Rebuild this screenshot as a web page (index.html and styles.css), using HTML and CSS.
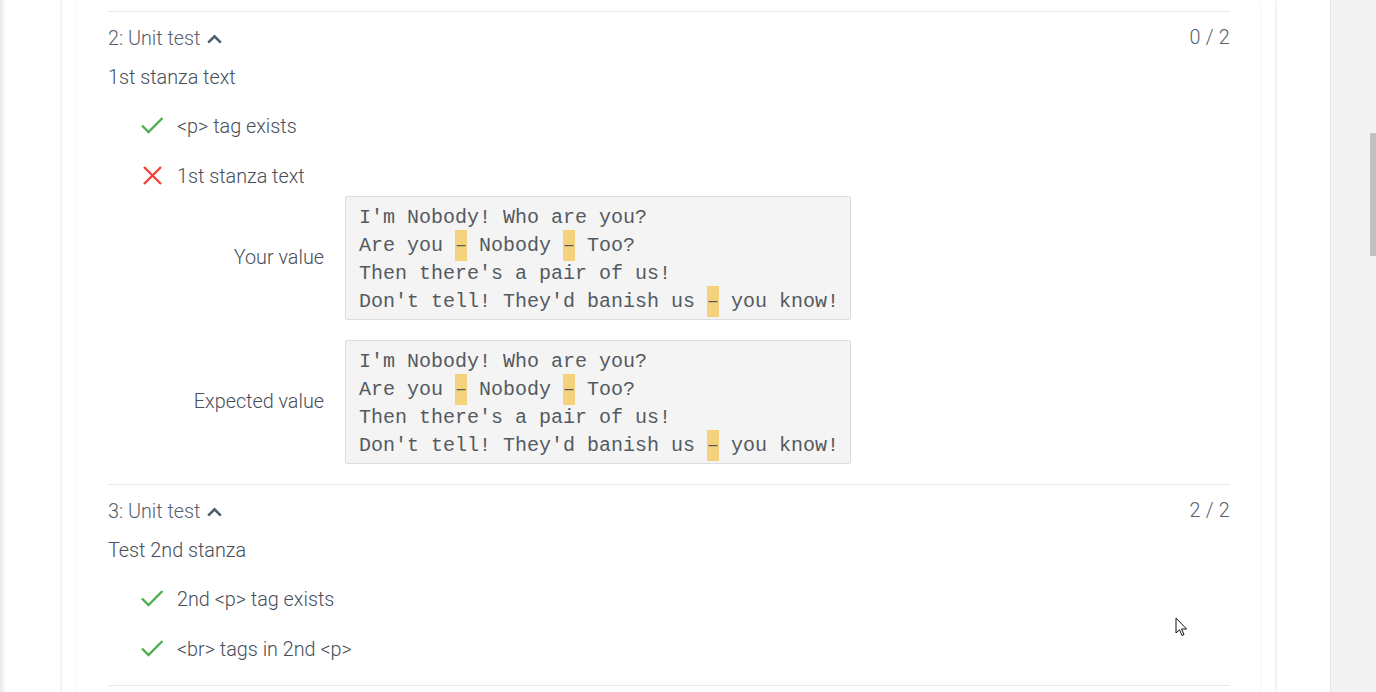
FILE: index.html
```html
<!DOCTYPE html>
<html>
<head>
<meta charset="utf-8">
<link rel="stylesheet" href="styles.css">
</head>
<body>
<div class="page">
  <div class="edge-left"></div>
  <div class="outer">
    <div class="inner">
      <div class="prev"></div>

      <section class="test">
        <div class="test-head">
          <div class="test-title">2: Unit test
            <svg class="chev" width="15" height="10" viewBox="0 0 15 10"><polyline points="1.2,8.6 7.5,2.3 13.8,8.6" fill="none" stroke="#4f5d6b" stroke-width="2.6"/></svg>
          </div>
          <div class="score">0 / 2</div>
        </div>
        <div class="desc">1st stanza text</div>
        <div class="checks">
          <div class="check">
            <svg class="icon" width="24" height="24" viewBox="0 0 24 24"><polyline points="2,11.5 8.5,18 22.5,4" fill="none" stroke="#4caf50" stroke-width="2.4"/></svg>
            <span>&lt;p&gt; tag exists</span>
          </div>
          <div class="check">
            <svg class="icon" width="24" height="24" viewBox="0 0 24 24"><path d="M4 3L21 20M21 3L4 20" fill="none" stroke="#f44336" stroke-width="2.4"/></svg>
            <span>1st stanza text</span>
          </div>
        </div>
        <div class="details">
          <div class="label">Your value</div>
          <pre class="code">I'm Nobody! Who are you?
Are you <span class="hl">–</span> Nobody <span class="hl">–</span> Too?
Then there's a pair of us!
Don't tell! They'd banish us <span class="hl">–</span> you know!</pre>
          <div class="label">Expected value</div>
          <pre class="code">I'm Nobody! Who are you?
Are you <span class="hl">–</span> Nobody <span class="hl">–</span> Too?
Then there's a pair of us!
Don't tell! They'd banish us <span class="hl">–</span> you know!</pre>
        </div>
      </section>

      <section class="test">
        <div class="test-head">
          <div class="test-title">3: Unit test
            <svg class="chev" width="15" height="10" viewBox="0 0 15 10"><polyline points="1.2,8.6 7.5,2.3 13.8,8.6" fill="none" stroke="#4f5d6b" stroke-width="2.6"/></svg>
          </div>
          <div class="score">2 / 2</div>
        </div>
        <div class="desc">Test 2nd stanza</div>
        <div class="checks">
          <div class="check">
            <svg class="icon" width="24" height="24" viewBox="0 0 24 24"><polyline points="2,11.5 8.5,18 22.5,4" fill="none" stroke="#4caf50" stroke-width="2.4"/></svg>
            <span>2nd &lt;p&gt; tag exists</span>
          </div>
          <div class="check">
            <svg class="icon" width="24" height="24" viewBox="0 0 24 24"><polyline points="2,11.5 8.5,18 22.5,4" fill="none" stroke="#4caf50" stroke-width="2.4"/></svg>
            <span>&lt;br&gt; tags in 2nd &lt;p&gt;</span>
          </div>
        </div>
      </section>
      <section class="test"></section>
    </div>
  </div>
  <div class="gap-right"></div>
  <div class="scroll">
    <div class="thumb"></div>
  </div>
  <svg class="cursor" width="14" height="22" viewBox="0 0 14 22"><path d="M1 1L1 16L4.5 12.8L7 18.5L9 17.6L6.6 12L11.5 12Z" fill="#fff" stroke="#111" stroke-width="1" stroke-linejoin="round"/></svg>
</div>
</body>
</html>
```

FILE: styles.css
```css
html, body {
  margin: 0;
  padding: 0;
  background: #fff;
  overflow: hidden;
}
.page {
  position: relative;
  display: flex;
  height: 692px;
  width: 1376px;
  overflow: hidden;
  font-family: Roboto, "Liberation Sans", sans-serif;
  font-weight: 300;
  color: #464e59;
}
.edge-left {
  width: 5px;
  flex: none;
  background: linear-gradient(to right, #e9e9e9, #fbfbfb);
  margin-right: 57px;
}
.outer {
  width: 1183px;
  flex: none;
  padding: 0 15px;
  background: #fff;
  box-shadow: 0 0 3px rgba(0, 0, 0, 0.18);
}
.inner {
  height: 100%;
  padding: 0 30px 0 31px;
  background: #fff;
  box-shadow: 0 0 2px rgba(0, 0, 0, 0.10);
}
.prev {
  height: 11px;
}
.test {
  border-top: 1px solid #e8e8e8;
  padding: 15px 0 24px;
}
.test-head {
  display: flex;
  justify-content: space-between;
  align-items: center;
  height: 24px;
}
.test-title {
  display: flex;
  align-items: center;
  font-size: 19.8px;
  line-height: 24px;
  color: #56606d;
}
.chev {
  margin-left: 7px;
  margin-top: -1px;
}
.score {
  font-size: 19.8px;
  line-height: 24px;
  color: #56606d;
  margin-top: -2px;
  letter-spacing: 0.2px;
}
.desc {
  margin-top: 15px;
  font-size: 19.8px;
  line-height: 24px;
}
.checks {
  margin-top: 24px;
  display: flex;
  flex-direction: column;
  gap: 26px;
  padding-left: 32px;
}
.check {
  display: flex;
  align-items: center;
  height: 24px;
  font-size: 19.8px;
  gap: 13px;
}
.icon {
  flex: none;
}
.details {
  margin-top: 8px;
  margin-bottom: -4px;
  display: grid;
  grid-template-columns: 237px max-content;
  row-gap: 20px;
  align-items: center;
}
.label {
  text-align: right;
  padding-right: 21px;
  font-size: 19.8px;
  line-height: 24px;
}
.code {
  margin: 0;
  padding: 7px 11px 3px 13px;
  background: #f4f4f4;
  border: 1px solid #dcdcdc;
  border-radius: 2px;
  font-family: "Liberation Mono", "Courier New", monospace;
  font-weight: 400;
  font-size: 20px;
  line-height: 28px;
  color: #555a60;
}
.hl {
  background: #f4d27c;
  padding: 4px 0;
}
.gap-right {
  width: 52px;
  flex: none;
  margin-left: 3px;
}
.scroll {
  flex: none;
  width: 45px;
  background: #f3f3f3;
  border-left: 1px solid #e6e6e6;
  display: flex;
  justify-content: flex-end;
  padding-top: 133px;
  align-items: flex-start;
}
.thumb {
  width: 6px;
  height: 123px;
  background: #c1c1c1;
}
.cursor {
  position: absolute;
  left: 1175px;
  top: 617px;
}
```
